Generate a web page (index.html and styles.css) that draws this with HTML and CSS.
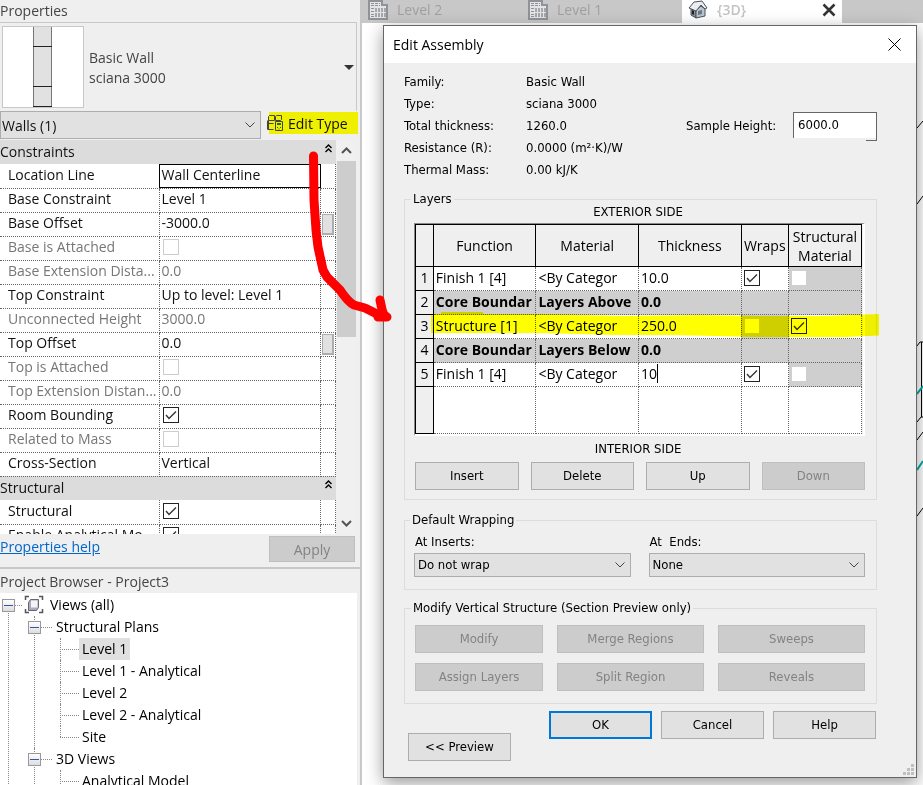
FILE: index.html
```html
<!DOCTYPE html>
<html lang="en">

<head>
    <meta charset="utf-8">
    <meta name="viewport" content="width=device-width, initial-scale=1.0">
    <title>Edit Assembly</title>
    <link rel="stylesheet" href="styles.css">
</head>

<body>
    <aside class="sidebar">
        <section class="properties">
            <h2 class="panel-title">Properties</h2>
            <div class="type-selector">
                <svg class="type-preview" width="82" height="82" viewBox="0 0 82 82">
                    <rect x=".5" y=".5" width="81" height="81" fill="#fff" stroke="#c8c8c8" />
                    <path fill="#e1e1e1" d="M31 1h19v79H31z" />
                    <path d="M31.500 1v79M49.500 1v79" stroke="#777" />
                    <path d="M31 20.500h19M31 60.500h19M31 80.500h19" stroke="#222" />
                </svg>
                <p class="type-name">Basic Wall<br>sciana 3000</p>
                <button class="type-arrow" aria-label="Change type"></button>
            </div>
            <div class="filter-row">
                <select class="filter-select" aria-label="Category">
                    <option>Walls (1)</option>
                </select>
                <button class="edit-type">
                    <svg width="17" height="17" viewBox="0 0 17 17" fill="none" stroke="#444">
                        <path d="M2.500 .5h5v5h-6v-4zM9.500 .5h5v4l-1 1h-5v-4zM1.500 8.500h5M.5 5.500v9h6M1.500 5.500v9" />
                        <path d="M8.500 6.500h7v9h-7z" fill="#efef00" />
                        <path d="M10 9h4" stroke="#187018" stroke-width="2" />
                        <path d="M10 12.500h1M13 12.500h1M11.500 14h1" />
                    </svg>
                    Edit Type
                </button>
            </div>
            <div class="property-area">
                <table class="property-table">
                    <colgroup>
                        <col class="col-name">
                        <col>
                        <col class="col-more">
                    </colgroup>
                    <tbody>
                        <tr class="group"><th colspan="2">Constraints</th><td><svg class="chevrons" width="7" height="9" viewBox="0 0 7 9"><path d="M.5 4l3-3 3 3M.5 8l3-3 3 3" /></svg></td></tr>
                        <tr><th>Location Line</th><td class="current">Wall Centerline</td><td></td></tr>
                        <tr><th>Base Constraint</th><td>Level 1</td><td></td></tr>
                        <tr><th>Base Offset</th><td>-3000.0</td><td><button class="more" aria-label="Associate base offset"></button></td></tr>
                        <tr class="off"><th><label for="base-attached">Base is Attached</label></th><td><input type="checkbox" id="base-attached" disabled></td><td></td></tr>
                        <tr class="off"><th>Base Extension Dista...</th><td>0.0</td><td></td></tr>
                        <tr><th>Top Constraint</th><td>Up to level: Level 1</td><td></td></tr>
                        <tr class="off"><th>Unconnected Height</th><td>3000.0</td><td></td></tr>
                        <tr><th>Top Offset</th><td>0.0</td><td><button class="more" aria-label="Associate top offset"></button></td></tr>
                        <tr class="off"><th><label for="top-attached">Top is Attached</label></th><td><input type="checkbox" id="top-attached" disabled></td><td></td></tr>
                        <tr class="off"><th>Top Extension Distan...</th><td>0.0</td><td></td></tr>
                        <tr><th><label for="room">Room Bounding</label></th><td><input type="checkbox" id="room" checked></td><td></td></tr>
                        <tr class="off"><th><label for="mass">Related to Mass</label></th><td><input type="checkbox" id="mass" disabled></td><td></td></tr>
                        <tr><th>Cross-Section</th><td>Vertical</td><td></td></tr>
                        <tr class="group"><th colspan="2">Structural</th><td><svg class="chevrons" width="7" height="9" viewBox="0 0 7 9"><path d="M.5 4l3-3 3 3M.5 8l3-3 3 3" /></svg></td></tr>
                        <tr><th><label for="structural">Structural</label></th><td><input type="checkbox" id="structural" checked></td><td></td></tr>
                        <tr><th><label for="analytical">Enable Analytical Mo...</label></th><td><input type="checkbox" id="analytical" checked></td><td></td></tr>
                    </tbody>
                </table>
                <div class="scrollbar">
                    <svg width="19" height="21" viewBox="0 0 19 21"><path d="M5 13l4.500-4.500 4.500 4.500" /></svg>
                    <div class="scroll-thumb"></div>
                    <svg width="19" height="21" viewBox="0 0 19 21"><path d="M5 8l4.500 4.500 4.500-4.500" /></svg>
                </div>
            </div>
            <div class="properties-footer">
                <a href="#">Properties help</a>
                <button class="btn apply" disabled>Apply</button>
            </div>
        </section>

        <section class="browser">
            <h2 class="panel-title">Project Browser - Project3</h2>
            <div class="tree-area">
                <ul class="tree">
                    <li class="root">
                        <div class="node"><button class="toggle" aria-label="Collapse"></button><i class="link short"></i>
                            <svg class="views-icon" width="20" height="20" viewBox="0 0 20 20" fill="none">
                                <path d="M1.500 5V1.500H5M15 1.500h3.500V5M18.500 14v3.500H15M5 17.500H1.500V14" stroke="#555" stroke-width="1.500" />
                                <path d="M4.500 7.500l2-3h8v8l-2 3h-8z" stroke="#667" fill="#aab" stroke-linejoin="round" />
                                <path d="M7 5.500h6.500v7H7z" fill="#f4f4f8" />
                            </svg>
                            Views (all)</div>
                        <ul>
                            <li>
                                <div class="node"><button class="toggle" aria-label="Collapse"></button><i class="link"></i><span class="label">Structural Plans</span></div>
                                <ul class="leaves">
                                    <li><span class="label selected">Level 1</span></li>
                                    <li><span class="label">Level 1 - Analytical</span></li>
                                    <li><span class="label">Level 2</span></li>
                                    <li><span class="label">Level 2 - Analytical</span></li>
                                    <li><span class="label">Site</span></li>
                                </ul>
                            </li>
                            <li>
                                <div class="node"><button class="toggle" aria-label="Collapse"></button><i class="link"></i><span class="label">3D Views</span></div>
                                <ul class="leaves more-below">
                                    <li><span class="label">Analytical Model</span></li>
                                </ul>
                            </li>
                        </ul>
                    </li>
                </ul>
            </div>
        </section>
    </aside>

    <main class="workspace">
        <nav class="tabs">
            <a href="#" class="tab">
                <svg width="20" height="20" viewBox="0 0 20 20" fill="none" stroke="#8f9298">
                    <path d="M1 1h13v4h5v14H1z" fill="#e4e4e4" stroke-width="2" />
                    <path d="M3 3.500h9M3 5.500h9M3 8.500h3M3 11.500h3M3 14.500h3M3 16.500h3" stroke-dasharray="3 1" />
                    <path d="M8 8v10M11 8v10M14 8v10M17 8v10" stroke-width="1.500" stroke-dasharray="4 1" />
                </svg>
                Level 2
            </a>
            <a href="#" class="tab">
                <svg width="20" height="20" viewBox="0 0 20 20" fill="none" stroke="#8f9298">
                    <path d="M1 1h13v4h5v14H1z" fill="#e4e4e4" stroke-width="2" />
                    <path d="M3 3.500h9M3 5.500h9M3 8.500h3M3 11.500h3M3 14.500h3M3 16.500h3" stroke-dasharray="3 1" />
                    <path d="M8 8v10M11 8v10M14 8v10M17 8v10" stroke-width="1.500" stroke-dasharray="4 1" />
                </svg>
                Level 1
            </a>
            <a href="#" class="tab active">
                <svg width="20" height="20" viewBox="0 0 20 20" stroke="#4b5259" stroke-linejoin="round">
                    <path d="M3 8l5 2v8l-5-3z" fill="#8a949e" />
                    <path d="M8 10l5-4 4 3v7l-9 2z" fill="#b9c5cf" />
                    <path d="M1 8l5-6 8-1 5 7-2 1-4-4-5 6z" fill="#e9eef2" />
                    <path d="M4 10v4l2 1v-4z" fill="#222" stroke="none" />
                    <path d="M10 11l4-1v4l-4 1z" fill="#6d7882" stroke="none" />
                </svg>
                {3D}
                <svg class="tab-close" width="14" height="14" viewBox="0 0 14 14"><path d="M1.500 1.500l11 11M12.500 1.500l-11 11" stroke="#333" stroke-width="2.500" /></svg>
            </a>
        </nav>

        <svg class="model-edge" width="6" height="785" viewBox="0 0 6 785" fill="none" stroke="#000">
            <path d="M0 128l6-7M0 204l6-8M0 346l3-4h3M4.500 342v75M0 422l4-5h2M0 440l6-8M0 516l6-8" />
            <path d="M0 394l6-8M0 470l6-9" stroke="#00a8a8" stroke-width="2" />
        </svg>

        <div class="dialog" role="dialog" aria-labelledby="dialog-title">
            <header class="dialog-header">
                <h1 id="dialog-title">Edit Assembly</h1>
                <button class="dialog-close" aria-label="Close"><svg width="13" height="13" viewBox="0 0 13 13"><path d="M.5 .5l12 12M12.500 .5l-12 12" stroke="#000" /></svg></button>
            </header>

            <div class="dialog-body">
                <div class="summary">
                    <dl class="facts">
                        <dt>Family:</dt><dd>Basic Wall</dd>
                        <dt>Type:</dt><dd>sciana 3000</dd>
                        <dt>Total thickness:</dt><dd>1260.0</dd>
                        <dt>Resistance (R):</dt><dd>0.0000 (m²·K)/W</dd>
                        <dt>Thermal Mass:</dt><dd>0.00 kJ/K</dd>
                    </dl>
                    <label for="sample-height">Sample Height:</label>
                    <input type="text" id="sample-height" class="sample-height" value="6000.0">
                </div>

                <fieldset class="box layers-box">
                    <legend>Layers</legend>
                    <p class="side exterior">EXTERIOR SIDE</p>
                    <div class="layers-frame">
                        <table class="layers">
                            <colgroup>
                                <col class="c-num">
                                <col class="c-function">
                                <col class="c-material">
                                <col class="c-thickness">
                                <col class="c-wraps">
                                <col class="c-structural">
                            </colgroup>
                            <thead>
                                <tr><th></th><th>Function</th><th>Material</th><th>Thickness</th><th>Wraps</th><th>Structural Material</th></tr>
                            </thead>
                            <tbody>
                                <tr><th>1</th><td>Finish 1 [4]</td><td>&lt;By Categor</td><td>10.0</td><td><input type="checkbox" aria-label="Wraps" checked></td><td class="grey"><input type="checkbox" aria-label="Structural material" disabled></td></tr>
                                <tr class="core"><th>2</th><td>Core Boundar</td><td>Layers Above</td><td>0.0</td><td></td><td></td></tr>
                                <tr><th>3</th><td>Structure [1]</td><td>&lt;By Categor</td><td>250.0</td><td class="grey"><input type="checkbox" aria-label="Wraps" disabled></td><td><input type="checkbox" aria-label="Structural material" checked></td></tr>
                                <tr class="core"><th>4</th><td>Core Boundar</td><td>Layers Below</td><td>0.0</td><td></td><td></td></tr>
                                <tr><th>5</th><td>Finish 1 [4]</td><td>&lt;By Categor</td><td><span class="caret">10</span></td><td><input type="checkbox" aria-label="Wraps" checked></td><td class="grey"><input type="checkbox" aria-label="Structural material" disabled></td></tr>
                                <tr class="empty"><th></th><td></td><td></td><td></td><td></td><td></td></tr>
                            </tbody>
                        </table>
                        <svg class="marker" viewBox="0 0 448 26" preserveAspectRatio="none">
                            <path fill="#ff0" d="M0 2h10V0h42v2h60l80 2 78-1 60 1h60l60-2 37-2h45v20h-38l-35 3-45 2h-88l-85-2h-56l-76-2H0z" />
                        </svg>
                    </div>
                    <p class="side">INTERIOR SIDE</p>
                    <div class="layer-buttons">
                        <button class="btn">Insert</button>
                        <button class="btn">Delete</button>
                        <button class="btn">Up</button>
                        <button class="btn" disabled>Down</button>
                    </div>
                </fieldset>

                <fieldset class="box wrapping-box">
                    <legend>Default Wrapping</legend>
                    <div class="wrapping">
                        <div>
                            <label for="at-inserts">At Inserts:</label>
                            <select id="at-inserts"><option>Do not wrap</option></select>
                        </div>
                        <div>
                            <label for="at-ends">At&nbsp; Ends:</label>
                            <select id="at-ends"><option>None</option></select>
                        </div>
                    </div>
                </fieldset>

                <fieldset class="box modify-box">
                    <legend>Modify Vertical Structure (Section Preview only)</legend>
                    <div class="modify-buttons">
                        <button class="btn" disabled>Modify</button>
                        <button class="btn" disabled>Merge Regions</button>
                        <button class="btn" disabled>Sweeps</button>
                        <button class="btn" disabled>Assign Layers</button>
                        <button class="btn" disabled>Split Region</button>
                        <button class="btn" disabled>Reveals</button>
                    </div>
                </fieldset>

                <footer class="dialog-footer">
                    <button class="btn preview">&lt;&lt; Preview</button>
                    <button class="btn ok">OK</button>
                    <button class="btn">Cancel</button>
                    <button class="btn">Help</button>
                </footer>
            </div>
            <svg class="grip" width="11" height="11" viewBox="0 0 11 11" fill="#bfbfbf">
                <path d="M8 0h3v3H8zM8 4h3v3H8zM4 4h3v3H4zM8 8h3v3H8zM4 8h3v3H4zM0 8h3v3H0z" />
            </svg>
        </div>
    </main>

    <svg class="arrow" width="90" height="180" viewBox="0 0 90 180" fill="none" stroke="#f00" stroke-width="9" stroke-linecap="round" stroke-linejoin="round">
        <path d="M8.500 6L9 50l2 30 2 17 5 23 4 7 13 13q8 12 14 15l11 3 12 6" />
        <path d="M75 150l3 14 4 3H73l5-5" />
    </svg>
</body>

</html>
```
FILE: styles.css
```css
* {
    box-sizing: border-box;
    margin: 0;
    padding: 0;
}

body {
    display: flex;
    position: relative;
    height: 100vh;
    overflow: hidden;
    background-color: #efefef;
    color: #111;
    font-family: "Open Sans", "Noto Sans", sans-serif;
    font-size: 14px;
    line-height: 20px;
}

button,
input,
select {
    font: inherit;
    color: inherit;
    border-radius: 0;
}

button {
    border: none;
    background: none;
}

ul {
    list-style: none;
}

/* check boxes */

input[type="checkbox"] {
    appearance: none;
    display: block;
    width: 16px;
    height: 16px;
    border: 1px solid #222;
    background-color: #fff;
}

input[type="checkbox"]:checked {
    background-image: url("data:image/svg+xml,%3Csvg xmlns='http://www.w3.org/2000/svg' viewBox='0 0 14 14'%3E%3Cpath d='M2 7l3 3.500 7-7' fill='none' stroke='%23333' stroke-width='1.400'/%3E%3C/svg%3E");
}

input[type="checkbox"]:disabled {
    border-color: #ccc;
}

/* buttons and drop-downs */

.btn {
    height: 28px;
    border: 1px solid #adadad;
    background-color: #e1e1e1;
    color: #000;
    text-align: center;
}

.btn:disabled {
    border-color: #bfbfbf;
    background-color: #ccc;
    color: #838383;
}

select {
    appearance: none;
    width: 100%;
    height: 24px;
    padding: 0 3px;
    border: 1px solid #adadad;
    background: #e1e1e1 url("data:image/svg+xml,%3Csvg xmlns='http://www.w3.org/2000/svg' viewBox='0 0 10 6'%3E%3Cpath d='M.5 .5L5 5 9.500 .5' fill='none' stroke='%23444'/%3E%3C/svg%3E") no-repeat right 5px center / 10px 6px;
}

/* left column */

.sidebar {
    display: flex;
    flex-direction: column;
    flex: 0 0 362px;
    border-right: 2px solid #c8c8c8;
}

.panel-title {
    height: 22px;
    color: #444;
    font-size: 14px;
    font-weight: 400;
    line-height: 22px;
}

.properties {
    border-bottom: 2px solid #c8c8c8;
}

.type-selector {
    display: flex;
    align-items: center;
    gap: 5px;
    height: 89px;
    margin-right: 3px;
    padding-left: 2px;
    border-top: 1px solid #c8c8c8;
    border-right: 1px solid #c8c8c8;
}

.type-name {
    flex: 1;
    padding-top: 2px;
    color: #444;
}

.type-arrow {
    width: 0;
    height: 0;
    margin-right: 2px;
    border: 5px solid transparent;
    border-top-color: #333;
    border-bottom: none;
}

.filter-row {
    display: flex;
    gap: 8px;
    height: 29px;
    margin-right: 2px;
}

.filter-select {
    flex: 1;
    height: 28px;
    padding: 2px 1px 0;
}

.edit-type {
    display: flex;
    align-items: center;
    gap: 4px;
    width: 89px;
    height: 22px;
    margin-top: 1px;
    padding-top: 1px;
    background-color: #efef00;
    white-space: nowrap;
}

.edit-type svg {
    flex: none;
    margin-left: -2px;
}

.property-area {
    display: flex;
    height: 394px;
    margin-right: 4px;
    overflow: hidden;
}

.property-table {
    flex: 1;
    table-layout: fixed;
    border-collapse: collapse;
    background-color: #fff;
}

.col-name {
    width: 159px;
}

.col-more {
    width: 15px;
}

.property-table tr {
    height: 24px;
}

.property-table th,
.property-table td {
    height: 24px;
    padding-bottom: 2px;
    border: 1px dotted #666;
    border-top: none;
    border-left: none;
    font-weight: 400;
    line-height: 20px;
    text-align: left;
    white-space: nowrap;
}

.property-table th {
    padding-left: 8px;
}

.property-table td {
    padding-left: 2px;
}

.property-table .group th,
.property-table .group td {
    padding: 0;
    border: none;
    background-color: #dcdcdc;
}

.property-table .off {
    color: #777;
}

.property-table .current {
    outline: 1px solid #000;
    outline-offset: -1px;
}

.property-table input {
    margin-left: 1px;
}

.chevrons {
    display: block;
    margin: 0 0 7px 3px;
    fill: none;
    stroke: #000;
    stroke-width: 1.400;
}

.more {
    display: block;
    width: 12px;
    height: 21px;
    border: 1px solid #adadad;
    border-right-width: 2px;
    border-bottom-width: 2px;
    background-color: #e1e1e1;
}

.property-table td:last-child {
    padding: 0 0 0 1px;
}

.scrollbar {
    display: flex;
    flex-direction: column;
    width: 20px;
    padding-left: 1px;
    background-color: #f0f0f0;
}

.scrollbar svg {
    flex: none;
    fill: none;
    stroke: #555;
    stroke-width: 2;
}

.scroll-thumb {
    height: 176px;
    margin-bottom: auto;
    background-color: #cdcdcd;
}

.properties-footer {
    display: flex;
    justify-content: space-between;
    height: 33px;
    padding: 2px 5px 0 0;
}

.properties-footer a {
    padding-top: 1px;
    color: #0066cc;
}

.apply {
    width: 86px;
    height: 26px;
    padding-top: 1px;
}

/* project browser */

.browser {
    display: flex;
    flex-direction: column;
    flex: 1;
    min-height: 0;
}

.browser .panel-title {
    flex: none;
    height: 24px;
    line-height: 26px;
}

.tree-area {
    flex: 1;
    margin-right: 3px;
    padding: 1px 0 0 2px;
    overflow: hidden;
    background-color: #fff;
    color: #000;
}

.tree li {
    position: relative;
    line-height: 22px;
}

.tree ul {
    margin-left: 26px;
}

.tree li::before {
    content: "";
    position: absolute;
    top: 0;
    bottom: 0;
    left: 6px;
    border-left: 1px dotted #888;
}

.tree .root::before {
    top: 11px;
}

.tree .leaves li:last-child::before {
    bottom: 11px;
}

.tree .more-below li:last-child::before {
    bottom: 0;
}

.node,
.leaves li {
    display: flex;
    align-items: center;
    height: 22px;
}

.toggle {
    position: relative;
    width: 13px;
    height: 13px;
    border: 1px solid #999;
    background: linear-gradient(#3355aa, #3355aa) no-repeat center / 9px 1px, linear-gradient(#fff, #ddd);
}

.link {
    width: 11px;
    border-top: 1px dotted #888;
}

.link.short {
    width: 7px;
}

.leaves li {
    padding-left: 6px;
}

.leaves li::after {
    content: "";
    order: -1;
    width: 19px;
    border-top: 1px dotted #888;
}

.label {
    padding: 0 4px;
}

.leaves .label {
    padding: 0 3px;
}

.views-icon {
    margin: 0 6px 0 2px;
}

.selected {
    background-color: #e0e0e0;
}

/* drawing area */

.workspace {
    position: relative;
    flex: 1;
    background-color: #fff;
}

.tabs {
    display: flex;
    height: 23px;
    background-color: #c8c8c8;
}

.tab {
    display: flex;
    align-items: center;
    gap: 9px;
    flex: 0 0 160px;
    padding: 0 6px 3px;
    color: #a0a0a0;
    text-decoration: none;
}

.tab.active {
    background-color: #fff;
    color: #c4c4c4;
    font-weight: 600;
}

.tab-close {
    margin-left: auto;
}

.model-edge {
    position: absolute;
    top: 0;
    right: 0;
}

/* dialog */

.dialog {
    position: absolute;
    top: 25px;
    right: 6px;
    left: 21px;
    border: 1px solid #666;
    background-color: #efefef;
    box-shadow: 0 5px 16px rgba(0, 0, 0, 0.4);
    color: #000;
    font-family: "DejaVu Sans Condensed", "DejaVu Sans", sans-serif;
    font-size: 13px;
}

.dialog-header {
    display: flex;
    align-items: center;
    justify-content: space-between;
    height: 37px;
    padding: 0 15px 0 9px;
    background-color: #fff;
}

.dialog-header h1 {
    font-family: "Open Sans", "Noto Sans", sans-serif;
    font-size: 14px;
    font-weight: 400;
}

.dialog-close svg {
    display: block;
}

.dialog-body {
    padding: 8px 39px 16px 20px;
}

.summary {
    display: flex;
    align-items: center;
    height: 110px;
}

.facts {
    display: grid;
    grid-template-columns: 122px 1fr;
    flex: 1;
    line-height: 22px;
}

.summary label {
    width: 107px;
}

/* the frame is open along the bottom except for the right corner */
.sample-height {
    width: 84px;
    height: 29px;
    padding: 0 5px 4px;
    border: none;
    background:
        linear-gradient(#666, #666) no-repeat left top / 100% 1px,
        linear-gradient(#666, #666) no-repeat left top / 1px 26px,
        linear-gradient(#666, #666) no-repeat right top / 1px 100%,
        linear-gradient(#666, #666) no-repeat right bottom / 11px 1px,
        linear-gradient(#fff, #fff) no-repeat left top / 100% 26px;
}

.box {
    min-width: 0;
    padding: 0 11px 9px 10px;
    border: 1px solid #dcdcdc;
}

.box legend {
    margin-left: -4px;
    padding: 0 2px;
    line-height: 20px;
}

.layers-box {
    margin-top: 8px;
}

.side {
    padding-right: 4px;
    line-height: 26px;
    text-align: center;
}

.exterior {
    height: 14px;
    line-height: 6px;
}

.layers-frame {
    position: relative;
    margin-left: -1px;
    padding-right: 1px;
    border: 1px solid #888;
    border-right: 2px solid #fff;
    border-bottom: 2px solid #fff;
}

.layers {
    width: 100%;
    table-layout: fixed;
    border-collapse: collapse;
    background-color: #fff;
    font-family: "Open Sans", "Noto Sans", sans-serif;
    font-size: 14px;
}

.c-num {
    width: 4%;
}

.c-function,
.c-material,
.c-thickness {
    width: 23%;
}

.c-structural {
    width: 73px;
}

.layers th {
    border: 1px solid #000;
    background-color: #efefef;
    font-weight: 400;
}

.layers thead th {
    height: 42px;
    line-height: 19px;
}

.layers tbody th {
    padding-bottom: 2px;
    line-height: 20px;
}

.layers td {
    height: 24px;
    padding: 0 0 2px 2px;
    border: 1px dotted #666;
    line-height: 20px;
    white-space: nowrap;
}

.layers .core td {
    background-color: #cfcfcf;
    font-weight: 700;
}

.layers .grey {
    background-color: #cfcfcf;
}

.layers .grey input {
    border-color: #cfcfcf;
}

.layers .empty td {
    height: 47px;
}

.caret {
    border-right: 1px solid #000;
}

.marker {
    position: absolute;
    top: 88px;
    left: 16px;
    width: 448px;
    height: 26px;
    mix-blend-mode: multiply;
}

.layer-buttons {
    display: grid;
    grid-template-columns: repeat(4, 1fr);
    gap: 12px;
}

.wrapping-box {
    margin-top: 10px;
    padding: 1px 11px 12px 9px;
}

.wrapping {
    display: flex;
    gap: 18px;
}

.wrapping div {
    flex: 1;
}

.wrapping label {
    display: block;
    padding-left: 1px;
    line-height: 22px;
}

.modify-box {
    margin-top: 8px;
    padding-bottom: 12px;
}

.modify-buttons {
    display: grid;
    grid-template-columns: 128px 1fr 1fr;
    gap: 10px 14px;
    padding-top: 7px;
}

.dialog-footer {
    display: flex;
    gap: 9px;
    padding: 7px 1px 0 0;
}

.dialog-footer .btn {
    width: 103px;
}

.dialog-footer .preview {
    margin: 22px auto 0 4px;
}

.dialog-footer .ok {
    border: 2px solid #0078d7;
}

.grip {
    position: absolute;
    right: 2px;
    bottom: 2px;
}

/* red pen stroke over both windows */
.arrow {
    position: absolute;
    top: 150px;
    left: 305px;
}
```
